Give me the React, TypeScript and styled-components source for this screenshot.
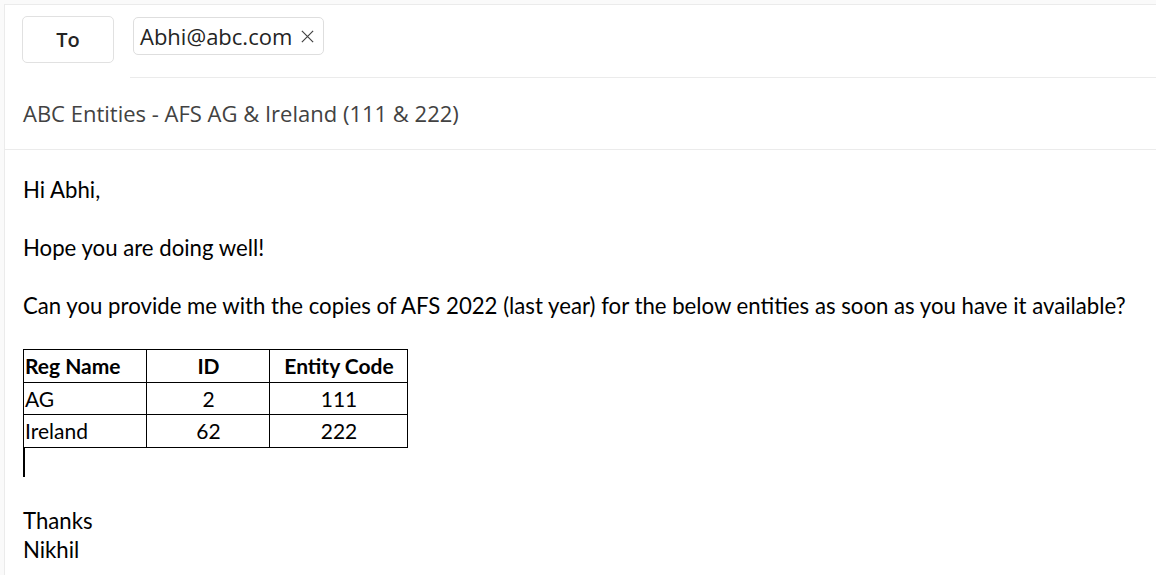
import React from 'react';
import styled, { createGlobalStyle } from 'styled-components';

const GlobalStyle = createGlobalStyle`
  html, body {
    margin: 0;
    padding: 0;
    background: #fafafa;
  }
`;

const Page = styled.div`
  padding: 4px 0 0 4px;
  height: 575px;
  box-sizing: border-box;
  overflow: hidden;
`;

const Compose = styled.div`
  height: 100%;
  background: #fff;
  border-top: 1px solid #ebebeb;
  border-left: 1px solid #ebebeb;
  font-family: 'Open Sans', 'Noto Sans', sans-serif;
`;

const ToRow = styled.div`
  display: flex;
  align-items: flex-start;
  padding: 11px 0 0 17px;
  height: 73px;
  box-sizing: border-box;
`;

const ToButton = styled.button`
  width: 92px;
  height: 47px;
  border: 1px solid #e1e1e1;
  border-radius: 5px;
  background: #fff;
  font-family: inherit;
  font-size: 20px;
  font-weight: 600;
  color: #242424;
  padding: 0;
`;

const Recipients = styled.div`
  flex: 1;
  align-self: stretch;
  margin-left: 16px;
  padding: 1px 0 0 3px;
  border-bottom: 1px solid #ebebeb;
`;

const Chip = styled.span`
  display: inline-flex;
  align-items: center;
  gap: 8px;
  height: 38px;
  box-sizing: border-box;
  padding: 0 8px 0 6px;
  border: 1px solid #dedede;
  border-radius: 5px;
  font-size: 22px;
  color: #242424;
`;

const SubjectRow = styled.div`
  height: 72px;
  box-sizing: border-box;
  display: flex;
  align-items: center;
  padding: 0 0 1px 18px;
  border-bottom: 1px solid #ebebeb;
  font-size: 22px;
  color: #424242;
`;

const Body = styled.div`
  padding: 25px 0 0 18px;
  font-family: 'Lato', 'Liberation Sans', sans-serif;
  font-size: 22.2px;
  line-height: 29px;
  color: #000;
`;

const Line = styled.div`
  min-height: 29px;
`;

const Table = styled.table`
  border-collapse: collapse;
  table-layout: fixed;
  width: 384px;
  font-size: 21px;
  line-height: 31.5px;
`;

const Cell = styled.td<{ $center?: boolean; $head?: boolean }>`
  border: 1px solid #000;
  padding: 0 0 0 1px;
  text-align: ${(p) => (p.$center ? 'center' : 'left')};
  font-weight: ${(p) => (p.$head ? 700 : 400)};
`;

const Caret = styled.div`
  width: 2px;
  height: 29px;
  background: #000;
`;

const rows = [
  ['AG', '2', '111'],
  ['Ireland', '62', '222'],
];

export default function App() {
  return (
    <>
      <GlobalStyle />
      <Page>
        <Compose>
          <ToRow>
            <ToButton>To</ToButton>
            <Recipients>
              <Chip>
                Abhi@abc.com
                <svg width="15" height="15" viewBox="0 0 16 16">
                  <path d="M2 2 L14 14 M14 2 L2 14" stroke="#424242" strokeWidth="1.3" fill="none" />
                </svg>
              </Chip>
            </Recipients>
          </ToRow>
          <SubjectRow>ABC Entities - AFS AG &amp; Ireland (111 &amp; 222)</SubjectRow>
          <Body>
            <Line>Hi Abhi,</Line>
            <Line />
            <Line>Hope you are doing well!</Line>
            <Line />
            <Line>
              Can you provide me with the copies of AFS 2022 (last year) for the below entities as soon as you have it
              available?
            </Line>
            <Line />
            <Table>
              <colgroup>
                <col style={{ width: 123 }} />
                <col style={{ width: 123 }} />
                <col style={{ width: 138 }} />
              </colgroup>
              <tbody>
                <tr>
                  <Cell $head>Reg Name</Cell>
                  <Cell $head $center>ID</Cell>
                  <Cell $head $center>Entity Code</Cell>
                </tr>
                {rows.map((r) => (
                  <tr key={r[0]}>
                    <Cell>{r[0]}</Cell>
                    <Cell $center>{r[1]}</Cell>
                    <Cell $center>{r[2]}</Cell>
                  </tr>
                ))}
              </tbody>
            </Table>
            <Caret />
            <Line />
            <Line>Thanks</Line>
            <Line>Nikhil</Line>
          </Body>
        </Compose>
      </Page>
    </>
  );
}
